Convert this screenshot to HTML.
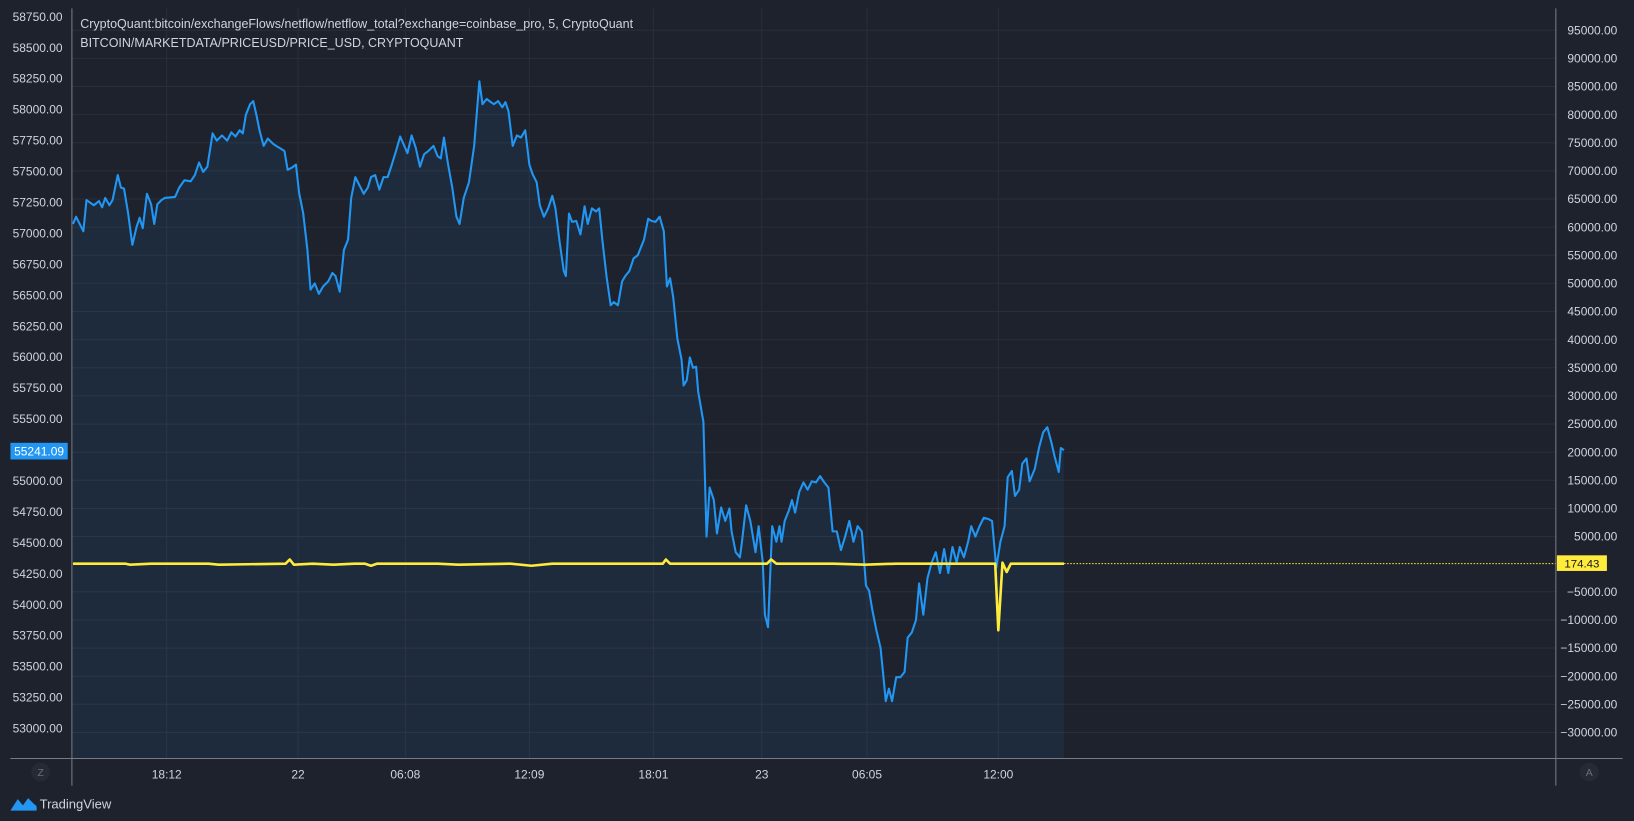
<!DOCTYPE html>
<html><head><meta charset="utf-8"><style>
html,body{margin:0;padding:0;background:#1e222d;overflow:hidden}
svg{display:block}
text{font-family:"Liberation Sans",sans-serif}
</style></head><body>
<svg width="1634" height="821" viewBox="0 0 1568 788" preserveAspectRatio="none" xmlns="http://www.w3.org/2000/svg">
<rect width="1568" height="788" fill="#1e222d"/>
<g stroke="#2a2e39" stroke-width="1">
<line x1="69" x2="1493" y1="29" y2="29"/><line x1="69" x2="1493" y1="56" y2="56"/><line x1="69" x2="1493" y1="83" y2="83"/><line x1="69" x2="1493" y1="110" y2="110"/><line x1="69" x2="1493" y1="137" y2="137"/><line x1="69" x2="1493" y1="164" y2="164"/><line x1="69" x2="1493" y1="191" y2="191"/><line x1="69" x2="1493" y1="218" y2="218"/><line x1="69" x2="1493" y1="245" y2="245"/><line x1="69" x2="1493" y1="272" y2="272"/><line x1="69" x2="1493" y1="299" y2="299"/><line x1="69" x2="1493" y1="326" y2="326"/><line x1="69" x2="1493" y1="353" y2="353"/><line x1="69" x2="1493" y1="380" y2="380"/><line x1="69" x2="1493" y1="407" y2="407"/><line x1="69" x2="1493" y1="434" y2="434"/><line x1="69" x2="1493" y1="461" y2="461"/><line x1="69" x2="1493" y1="488" y2="488"/><line x1="69" x2="1493" y1="515" y2="515"/><line x1="69" x2="1493" y1="568" y2="568"/><line x1="69" x2="1493" y1="595" y2="595"/><line x1="69" x2="1493" y1="622" y2="622"/><line x1="69" x2="1493" y1="649" y2="649"/><line x1="69" x2="1493" y1="676" y2="676"/><line x1="69" x2="1493" y1="703" y2="703"/>
<line y1="8" y2="728" x1="160" x2="160"/><line y1="8" y2="728" x1="286" x2="286"/><line y1="8" y2="728" x1="389" x2="389"/><line y1="8" y2="728" x1="508" x2="508"/><line y1="8" y2="728" x1="627" x2="627"/><line y1="8" y2="728" x1="731" x2="731"/><line y1="8" y2="728" x1="832" x2="832"/><line y1="8" y2="728" x1="958" x2="958"/>
</g>
<path fill="#2196f3" fill-opacity="0.08" d="M70,728 70,215 73,208 80,222 83,192 90,197 95,193 98,199 101,190 105,197 108,192 113,168 116,180 119,181 123,205 127,235 131,218 134,209 137,219 141,186 145,196 148,215 151,196 155,192 158,190 168,189 172,180 177,173 183,174 187,168 191,156 195,165 199,160 204,128 208,135 213,130 218,135 222,127 226,131 230,125 233,128 236,110 240,100 243,97 246,110 249,125 253,140 257,133 262,138 265,140 270,143 273,145 276,163 280,161 284,158 287,185 291,205 295,240 298,278 302,272 306,282 310,275 315,270 319,262 322,265 326,280 330,240 334,230 337,190 341,170 345,178 349,186 353,180 356,170 360,168 364,182 368,170 372,170 376,158 380,145 384,131 388,140 391,147 395,130 399,142 403,160 407,148 411,145 416,140 420,150 423,152 426,132 430,158 434,180 438,208 441,215 445,190 450,175 455,140 460,78 463,100 467,95 471,98 474,100 478,97 482,103 485,98 488,107 492,140 496,130 500,132 504,125 508,158 511,167 515,175 518,197 522,208 526,200 530,188 533,200 537,232 541,260 543,265 546,205 549,213 553,212 557,225 561,198 564,215 568,200 572,203 575,200 578,230 582,265 586,293 589,290 593,293 597,270 600,265 604,260 608,248 612,245 614,240 618,230 622,210 625,212 629,213 633,208 637,222 640,275 643,267 646,285 650,325 654,345 656,370 659,365 662,343 665,353 668,352 670,376 675,405 678,515 681,468 685,480 688,512 692,487 696,500 700,488 702,510 706,530 710,535 712,520 716,485 720,500 725,530 728,505 732,540 734,590 737,602 741,505 745,520 748,505 750,520 753,500 757,490 760,480 763,492 767,472 771,463 775,470 779,462 783,463 787,457 791,463 795,468 799,510 803,510 807,528 811,515 815,500 819,520 823,505 827,510 831,562 834,567 837,585 841,605 845,622 848,652 850,673 853,661 856,673 860,650 864,650 868,645 871,612 875,607 879,595 882,560 886,590 890,555 894,540 898,530 902,550 906,527 910,550 914,525 918,540 921,525 925,535 929,520 932,505 936,515 940,505 944,497 948,498 952,500 956,545 960,520 964,505 967,458 971,452 974,476 978,470 981,445 985,440 988,462 993,450 997,430 1001,415 1005,410 1009,425 1012,438 1016,453 1018,430 1021,432 1021,728Z"/>
<path fill="none" stroke="#2196f3" stroke-width="2" stroke-linejoin="round" d="M70,215 73,208 80,222 83,192 90,197 95,193 98,199 101,190 105,197 108,192 113,168 116,180 119,181 123,205 127,235 131,218 134,209 137,219 141,186 145,196 148,215 151,196 155,192 158,190 168,189 172,180 177,173 183,174 187,168 191,156 195,165 199,160 204,128 208,135 213,130 218,135 222,127 226,131 230,125 233,128 236,110 240,100 243,97 246,110 249,125 253,140 257,133 262,138 265,140 270,143 273,145 276,163 280,161 284,158 287,185 291,205 295,240 298,278 302,272 306,282 310,275 315,270 319,262 322,265 326,280 330,240 334,230 337,190 341,170 345,178 349,186 353,180 356,170 360,168 364,182 368,170 372,170 376,158 380,145 384,131 388,140 391,147 395,130 399,142 403,160 407,148 411,145 416,140 420,150 423,152 426,132 430,158 434,180 438,208 441,215 445,190 450,175 455,140 460,78 463,100 467,95 471,98 474,100 478,97 482,103 485,98 488,107 492,140 496,130 500,132 504,125 508,158 511,167 515,175 518,197 522,208 526,200 530,188 533,200 537,232 541,260 543,265 546,205 549,213 553,212 557,225 561,198 564,215 568,200 572,203 575,200 578,230 582,265 586,293 589,290 593,293 597,270 600,265 604,260 608,248 612,245 614,240 618,230 622,210 625,212 629,213 633,208 637,222 640,275 643,267 646,285 650,325 654,345 656,370 659,365 662,343 665,353 668,352 670,376 675,405 678,515 681,468 685,480 688,512 692,487 696,500 700,488 702,510 706,530 710,535 712,520 716,485 720,500 725,530 728,505 732,540 734,590 737,602 741,505 745,520 748,505 750,520 753,500 757,490 760,480 763,492 767,472 771,463 775,470 779,462 783,463 787,457 791,463 795,468 799,510 803,510 807,528 811,515 815,500 819,520 823,505 827,510 831,562 834,567 837,585 841,605 845,622 848,652 850,673 853,661 856,673 860,650 864,650 868,645 871,612 875,607 879,595 882,560 886,590 890,555 894,540 898,530 902,550 906,527 910,550 914,525 918,540 921,525 925,535 929,520 932,505 936,515 940,505 944,497 948,498 952,500 956,545 960,520 964,505 967,458 971,452 974,476 978,470 981,445 985,440 988,462 993,450 997,430 1001,415 1005,410 1009,425 1012,438 1016,453 1018,430 1021,432"/>
<line x1="1021" x2="1493" y1="541" y2="541" stroke="#ffeb3b" stroke-width="1" stroke-dasharray="1.5,1.5"/>
<path fill="none" stroke="#ffeb3b" stroke-width="2.5" stroke-linejoin="round" d="M70,541 120,541 125,542 145,541 200,541 210,542 274,541 278,537 282,542 300,541 320,542 340,541 350,541 356,543 362,541 420,541 440,542 490,541 510,543 530,541 600,541 636,541 639,537 643,541 700,541 736,541 740,537 745,541 800,541 830,542 860,541 955,541 958,605 962,540 966,549 970,541 1021,541"/>
<g stroke="#787b86" stroke-width="1"><line x1="69" x2="69" y1="8" y2="754"/><line x1="1493" x2="1493" y1="8" y2="754"/><line x1="10" x2="1557" y1="728" y2="728"/></g>
<g font-size="11.5" fill="#d1d4dc" text-anchor="end">
<text x="60" y="20">58750.00</text><text x="60" y="49.7">58500.00</text><text x="60" y="79.4">58250.00</text><text x="60" y="109.1">58000.00</text><text x="60" y="138.8">57750.00</text><text x="60" y="168.5">57500.00</text><text x="60" y="198.2">57250.00</text><text x="60" y="227.9">57000.00</text><text x="60" y="257.6">56750.00</text><text x="60" y="287.3">56500.00</text><text x="60" y="317">56250.00</text><text x="60" y="346.7">56000.00</text><text x="60" y="376.4">55750.00</text><text x="60" y="406.1">55500.00</text><text x="60" y="465.5">55000.00</text><text x="60" y="495.2">54750.00</text><text x="60" y="524.9">54500.00</text><text x="60" y="554.6">54250.00</text><text x="60" y="584.3">54000.00</text><text x="60" y="614">53750.00</text><text x="60" y="643.7">53500.00</text><text x="60" y="673.4">53250.00</text><text x="60" y="703.1">53000.00</text>
<text x="1552" y="33">95000.00</text><text x="1552" y="60">90000.00</text><text x="1552" y="87">85000.00</text><text x="1552" y="114">80000.00</text><text x="1552" y="141">75000.00</text><text x="1552" y="168">70000.00</text><text x="1552" y="195">65000.00</text><text x="1552" y="222">60000.00</text><text x="1552" y="249">55000.00</text><text x="1552" y="276">50000.00</text><text x="1552" y="303">45000.00</text><text x="1552" y="330">40000.00</text><text x="1552" y="357">35000.00</text><text x="1552" y="384">30000.00</text><text x="1552" y="411">25000.00</text><text x="1552" y="438">20000.00</text><text x="1552" y="465">15000.00</text><text x="1552" y="492">10000.00</text><text x="1552" y="519">5000.00</text><text x="1552" y="572">−5000.00</text><text x="1552" y="599">−10000.00</text><text x="1552" y="626">−15000.00</text><text x="1552" y="653">−20000.00</text><text x="1552" y="680">−25000.00</text><text x="1552" y="707">−30000.00</text>
</g>
<rect x="10" y="425" width="55" height="16" fill="#2196f3"/>
<text x="37.5" y="437" font-size="11.5" fill="#fff" text-anchor="middle">55241.09</text>
<rect x="1494" y="533" width="48" height="15" fill="#ffeb3b"/>
<text x="1518" y="544.5" font-size="11" fill="#131722" text-anchor="middle">174.43</text>
<g font-size="11.5" fill="#d1d4dc" text-anchor="middle">
<text x="160" y="747">18:12</text><text x="286" y="747">22</text><text x="389" y="747">06:08</text><text x="508" y="747">12:09</text><text x="627" y="747">18:01</text><text x="731" y="747">23</text><text x="832" y="747">06:05</text><text x="958" y="747">12:00</text>
</g>
<circle cx="39" cy="741" r="9" fill="#262a35"/><text x="39" y="745" font-size="10" fill="#6a6d78" text-anchor="middle">Z</text>
<circle cx="1525" cy="741" r="9" fill="#262a35"/><text x="1525" y="745" font-size="10" fill="#6a6d78" text-anchor="middle">A</text>
<g font-size="12" fill="#d1d4dc">
<text x="77" y="27">CryptoQuant:bitcoin/exchangeFlows/netflow/netflow_total?exchange=coinbase_pro, 5, CryptoQuant</text>
<text x="77" y="45">BITCOIN/MARKETDATA/PRICEUSD/PRICE_USD, CRYPTOQUANT</text>
</g>
<path d="M10,778 L17,767 L22,773 L27,766 L33,772 Q36,773 35,778 Z" fill="#2196f3"/>
<text x="38" y="776" font-size="12.5" fill="#d1d4dc">TradingView</text>
</svg>
</body></html>
